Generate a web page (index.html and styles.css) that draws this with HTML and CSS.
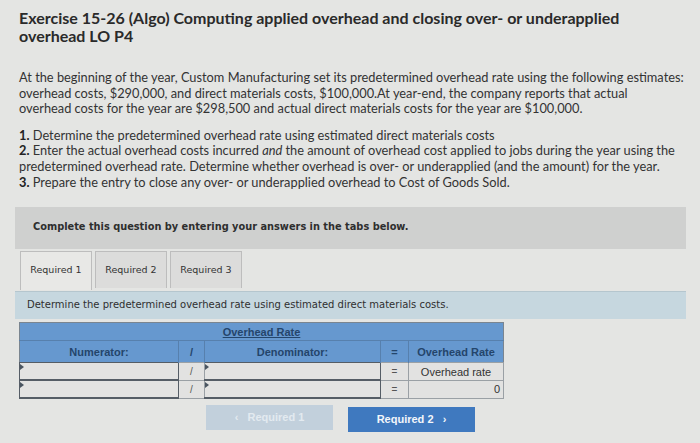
FILE: index.html
```html
<!DOCTYPE html>
<html>
<head>
<meta charset="utf-8">
<link rel="stylesheet" href="styles.css">
</head>
<body>
<div class="page">
  <h1 class="title">Exercise 15-26 (Algo) Computing applied overhead and closing over- or underapplied overhead LO P4</h1>
  <p class="intro">At the beginning of the year, Custom Manufacturing set its predetermined overhead rate using the following estimates:<br>overhead costs, $290,000, and direct materials costs, $100,000.At year-end, the company reports that actual<br>overhead costs for the year are $298,500 and actual direct materials costs for the year are $100,000.</p>
  <div class="steps">
    <div><b>1.</b> Determine the predetermined overhead rate using estimated direct materials costs</div>
    <div><b>2.</b> Enter the actual overhead costs incurred <i>and</i> the amount of overhead cost applied to jobs during the year using the<br>predetermined overhead rate. Determine whether overhead is over- or underapplied (and the amount) for the year.</div>
    <div><b>3.</b> Prepare the entry to close any over- or underapplied overhead to Cost of Goods Sold.</div>
  </div>
  <div class="wide">
    <div class="complete">Complete this question by entering your answers in the tabs below.</div>
    <div class="tabs">
      <div class="tab active">Required 1</div>
      <div class="tab">Required 2</div>
      <div class="tab">Required 3</div>
    </div>
    <div class="instr">Determine the predetermined overhead rate using estimated direct materials costs.</div>
  </div>
  <table class="rate">
    <tr class="h1"><th colspan="5"><u>Overhead Rate</u></th></tr>
    <tr class="h2">
      <th class="c-num">Numerator:</th>
      <th class="c-op">/</th>
      <th class="c-den">Denominator:</th>
      <th class="c-op2">=</th>
      <th class="c-res">Overhead Rate</th>
    </tr>
    <tr>
      <td class="inp"><span class="tri"></span></td>
      <td class="op">/</td>
      <td class="inp"><span class="tri"></span></td>
      <td class="op">=</td>
      <td class="res">Overhead rate</td>
    </tr>
    <tr>
      <td class="inp"><span class="tri"></span></td>
      <td class="op">/</td>
      <td class="inp"><span class="tri"></span></td>
      <td class="op">=</td>
      <td class="res num">0</td>
    </tr>
  </table>
  <div class="nav">
    <div class="btn prev">&lsaquo;&nbsp;&nbsp; Required 1</div>
    <div class="btn next">Required 2 &nbsp;&nbsp;&rsaquo;</div>
  </div>
</div>
</body>
</html>
```

FILE: styles.css
```css
html, body {
  margin: 0;
  padding: 0;
  background: #e4e5e3;
}
.page {
  width: 700px;
  height: 443px;
  overflow: hidden;
  padding: 9px 0 0 19px;
  box-sizing: border-box;
  font-family: Lato, "Liberation Sans", sans-serif;
  color: #2b2b2b;
}
.title {
  margin: 0;
  font-size: 16px;
  line-height: 18px;
  font-weight: bold;
  color: #2a2a2a;
  width: 640px;
}
.intro {
  margin: 25px 0 0 0;
  font-size: 12.8px;
  line-height: 15.5px;
  color: #333;
  white-space: nowrap;
}
.steps {
  margin-top: 11px;
  font-size: 12.8px;
  line-height: 15.7px;
  color: #333;
  white-space: nowrap;
}
.steps b { font-weight: bold; color: #222; }
.wide { width: 671px; margin-left: -4px; }
.complete {
  margin-top: 17px;
  height: 42px;
  background: #cfd0cf;
  font-family: "DejaVu Sans", Verdana, sans-serif;
  font-weight: bold;
  font-size: 9.8px;
  line-height: 40px;
  padding-left: 18px;
  color: #2e2e2e;
}
.tabs {
  display: flex;
  gap: 3px;
  margin: 2px 0 0 5px;
  height: 37px;
}
.tab {
  width: 70px;
  border: 1px solid #bdbdbd;
  border-bottom: none;
  background: #dcdcdb;
  font-family: "DejaVu Sans", Verdana, sans-serif;
  font-size: 9.5px;
  color: #333;
  text-align: center;
  line-height: 36px;
}
.tab.active { background: #e8e8e6; height: 38px; }
.instr {
  margin-top: 3px;
  height: 27px;
  background: #c6d7df;
  border-top: 1px solid #b5c6ce;
  font-family: "DejaVu Sans", Verdana, sans-serif;
  font-size: 10px;
  line-height: 26px;
  padding-left: 12px;
  color: #2f2f2f;
}
.rate {
  margin-top: 3px;
  border-collapse: collapse;
  width: 485px;
  font-family: "Liberation Sans", Arial, sans-serif;
  font-size: 11px;
  border: 1px solid #7a8590;
}
.rate th {
  background: #6698cf;
  color: #24456b;
  font-weight: bold;
  padding: 0;
}
.h1 th { height: 17px; border-bottom: 1px solid #5780ad; }
.h2 th { height: 21px; border-right: 1px solid #5780ad; }
.h2 th:last-child { border-right: none; }
.c-num { width: 158px; }
.c-op { width: 25px; }
.c-den { width: 175px; }
.c-op2 { width: 27px; }
.rate td {
  height: 16px;
  padding: 0;
  border: 1px solid #9aa0a5;
  background: #e2e2e1;
  text-align: center;
  color: #333;
}
.rate td.inp {
  border: 1px solid #555d66;
  border-width: 1px 1px 2px 1px;
  position: relative;
  background: #e3e3e2;
}
.tri {
  position: absolute;
  left: 0;
  top: 1px;
  width: 0;
  height: 0;
  border-top: 3px solid transparent;
  border-bottom: 3px solid transparent;
  border-left: 4px solid #4a5561;
}
.rate td.op { color: #555; font-size: 10px; }
.rate td.res { font-size: 11px; color: #333; }
.rate td.num { text-align: right; padding-right: 3px; }
.nav {
  display: flex;
  gap: 15px;
  margin: 6px 0 0 187px;
}
.btn {
  width: 127px;
  height: 25px;
  line-height: 25px;
  text-align: center;
  font-family: "Liberation Sans", Arial, sans-serif;
  font-weight: bold;
  font-size: 11px;
}
.btn.prev { background: #c2d0dc; color: #e3eaf0; }
.btn.next { background: #3f79bf; color: #f3f6fa; margin-top: 2px; }
```
